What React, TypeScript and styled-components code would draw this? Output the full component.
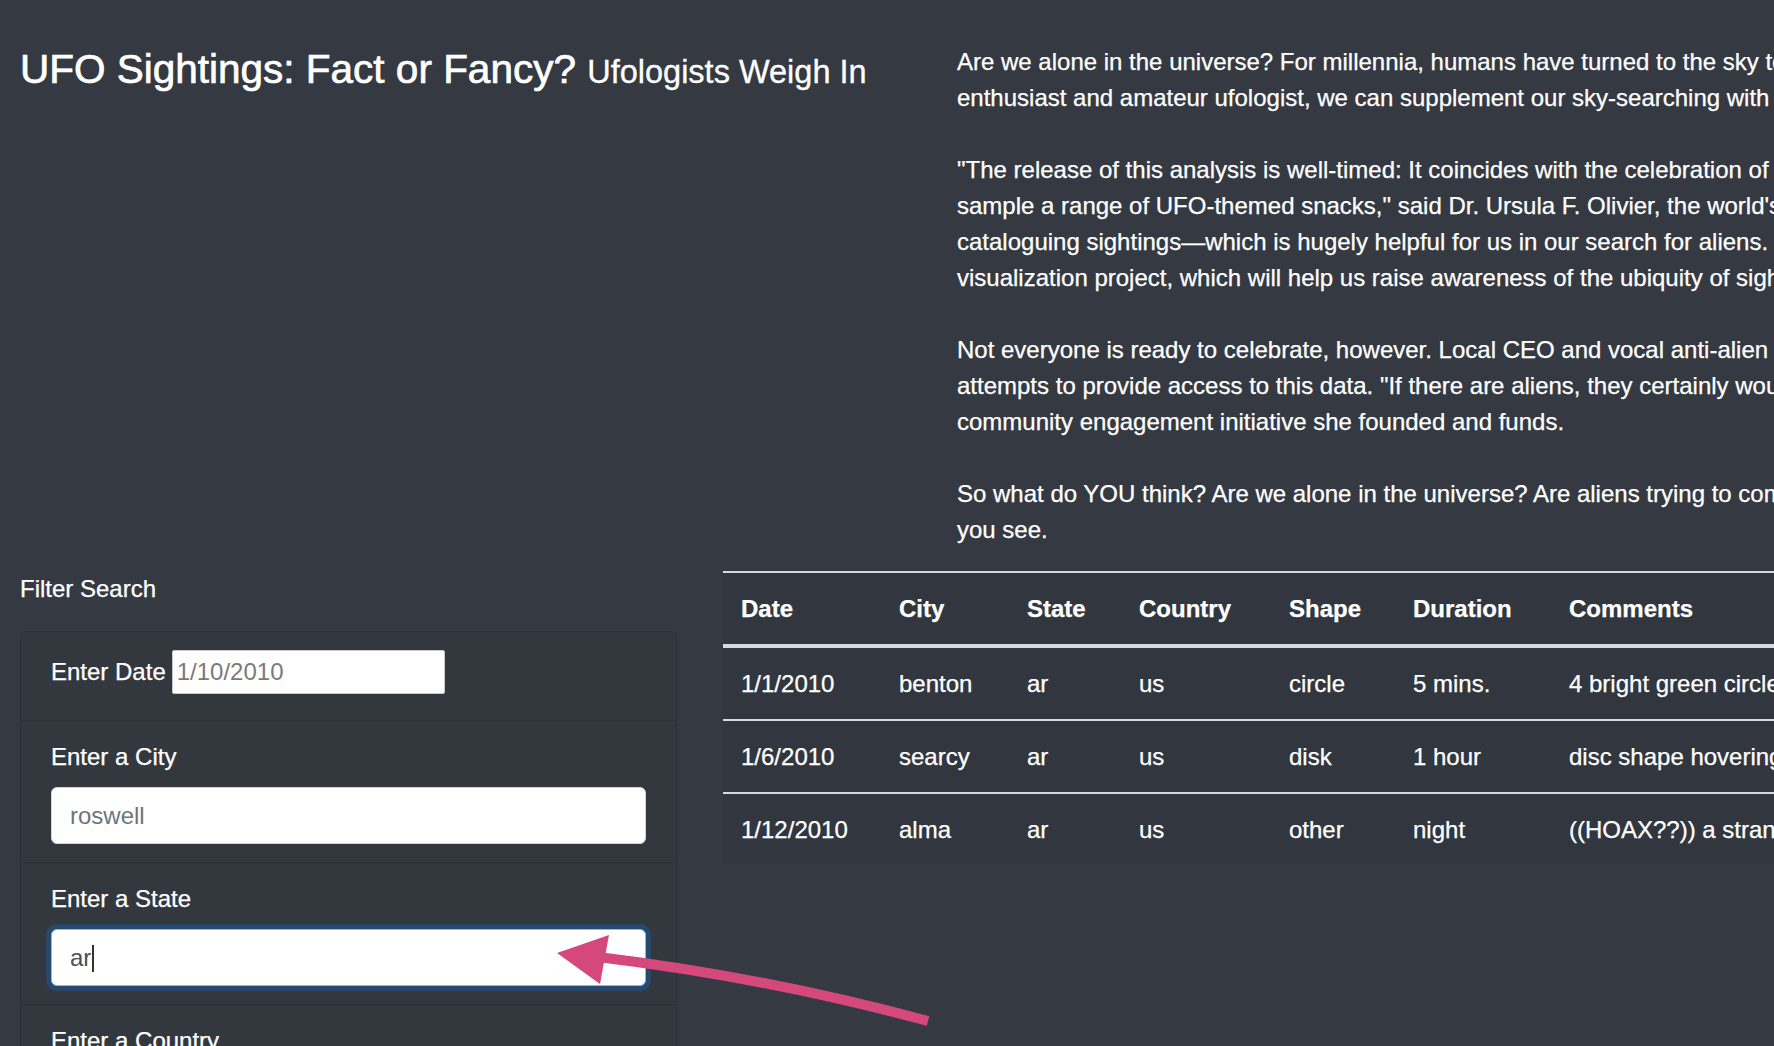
import React from 'react';
import styled, { createGlobalStyle } from 'styled-components';

const GlobalStyle = createGlobalStyle`
  html, body {
    margin: 0;
    padding: 0;
    overflow: hidden;
    background-color: #353a42;
  }
  body {
    font-family: "Liberation Sans", Arial, Helvetica, sans-serif;
    color: #ffffff;
  }
  * {
    box-sizing: border-box;
  }
`;

const Page = styled.div`
  position: relative;
  width: 100vw;
  height: 100vh;
  overflow: hidden;
  padding: 44px 0 0 20px;
`;

const IntroRow = styled.div`
  display: grid;
  grid-template-columns: 937px 1fr;
  margin-bottom: 23px;
`;

const Title = styled.h1`
  margin: 0;
  padding-top: 1px;
  font-size: 40.5px;
  font-weight: 400;
  line-height: 1.2;
  white-space: nowrap;
  -webkit-text-stroke: 0.7px #ffffff;
`;

const SubTitle = styled.small`
  font-size: 32.5px;
  font-weight: 400;
  -webkit-text-stroke: 0.3px #ffffff;
`;

const Story = styled.div`
  min-width: 0;
`;

const Paragraph = styled.p`
  margin: 0 0 36px;
  font-size: 24px;
  line-height: 36px;
  -webkit-text-stroke: 0.25px #ffffff;

  &:last-child {
    margin-bottom: 0;
  }
`;

const Line = styled.span`
  display: block;
  white-space: nowrap;
`;

const MainRow = styled.div`
  display: grid;
  grid-template-columns: 657px 1fr;
  column-gap: 46px;
  align-items: start;
`;

const FilterTitle = styled.div`
  font-size: 24px;
  line-height: 36px;
  margin-bottom: 24px;
  -webkit-text-stroke: 0.25px #ffffff;
`;

const FilterList = styled.ul`
  list-style: none;
  margin: 0;
  padding: 0;
  width: 657px;
  border-radius: 6px 6px 0 0;
  border: 1px solid #2c3036;
  background-color: #33383f;
`;

const FilterItem = styled.li`
  padding: 18px 30px;
  border-top: 1px solid #2c3036;

  &:first-child {
    border-top: none;
  }
`;

const DateRow = styled.div`
  display: flex;
  align-items: flex-start;
  gap: 6px;
  height: 52px;
`;

const InlineLabel = styled.label`
  font-size: 24px;
  line-height: 44px;
  -webkit-text-stroke: 0.25px #ffffff;
`;

const DateInput = styled.input`
  width: 273px;
  height: 44px;
  padding: 0 4px;
  font-family: inherit;
  font-size: 24px;
  color: #333;
  background: #fff;
  border: 1px solid #c6c8cc;
  border-radius: 2px;
  outline: none;

  &::placeholder {
    color: #7a7a7a;
  }
`;

const FieldLabel = styled.label`
  display: block;
  font-size: 24px;
  line-height: 36px;
  margin-bottom: 12px;
  -webkit-text-stroke: 0.25px #ffffff;
`;

const FieldWrap = styled.div`
  position: relative;
`;

const Caret = styled.span`
  position: absolute;
  left: 41px;
  top: 16px;
  width: 1.5px;
  height: 27px;
  background-color: #333;
`;

const FieldInput = styled.input<{ $focused?: boolean }>`
  display: block;
  width: 100%;
  height: 57px;
  padding: 0 18px;
  font-family: inherit;
  font-size: 24px;
  color: #495057;
  background-color: #fff;
  border: 1.5px solid ${({ $focused }) => ($focused ? '#80bdff' : '#ced4da')};
  border-radius: 6px;
  outline: none;
  box-shadow: ${({ $focused }) =>
    $focused ? '0 0 0 4.8px rgba(0, 123, 255, 0.25)' : 'none'};

  &::placeholder {
    color: #6c757d;
  }
`;

const TableBox = styled.div`
  min-width: 0;
`;

const Table = styled.table`
  width: 1500px;
  table-layout: fixed;
  border-collapse: separate;
  border-spacing: 0;
  background-color: rgba(0, 0, 0, 0.045);
  font-size: 24px;
  line-height: 36px;
  -webkit-text-stroke: 0.25px #ffffff;
`;

const Col = styled.col<{ $w: number }>`
  width: ${({ $w }) => $w}px;
`;

const HeadCell = styled.th`
  padding: 18px 18px 17px;
  text-align: left;
  font-weight: 700;
  white-space: nowrap;
  border-top: 2px solid #d6dadf;
  border-bottom: 2px solid #d6dadf;
`;

const Cell = styled.td`
  padding: 18px 18px 17px;
  white-space: nowrap;
  overflow: hidden;
  border-top: 2px solid #d6dadf;
`;

const BodyRow = styled.tr`
  &:first-child td {
    border-top: 2px solid #d6dadf;
  }
`;

const Annotation = styled.svg`
  position: absolute;
  left: 0;
  top: 0;
  pointer-events: none;
`;

const story: string[][] = [
  [
    'Are we alone in the universe? For millennia, humans have turned to the sky to find answers to this question, and now, with the help of Dana, a data visualization',
    'enthusiast and amateur ufologist, we can supplement our sky-searching with data analysis.',
  ],
  [
    '"The release of this analysis is well-timed: It coincides with the celebration of World UFO Day, when people across the globe gather to scan the skies and',
    'sample a range of UFO-themed snacks," said Dr. Ursula F. Olivier, the world\'s foremost expert on UFOs. "Dana and her team have done an incredible job',
    'cataloguing sightings\u2014which is hugely helpful for us in our search for aliens. We are very excited to see the results of this data',
    'visualization project, which will help us raise awareness of the ubiquity of sightings."',
  ],
  [
    'Not everyone is ready to celebrate, however. Local CEO and vocal anti-alien activist Irving S. Kepler vehemently denounces these',
    'attempts to provide access to this data. "If there are aliens, they certainly would not want us to find them," said Kepler at a',
    'community engagement initiative she founded and funds.',
  ],
  [
    'So what do YOU think? Are we alone in the universe? Are aliens trying to communicate with us? Dig through the data yourself and decide what',
    'you see.',
  ],
];

const columns = [
  { name: 'Date', width: 158 },
  { name: 'City', width: 128 },
  { name: 'State', width: 112 },
  { name: 'Country', width: 150 },
  { name: 'Shape', width: 124 },
  { name: 'Duration', width: 156 },
  { name: 'Comments', width: 672 },
];

const sightings = [
  {
    datetime: '1/1/2010',
    city: 'benton',
    state: 'ar',
    country: 'us',
    shape: 'circle',
    duration: '5 mins.',
    comments: '4 bright green circles high in the sky going in circles then one bright green light at my front door.',
  },
  {
    datetime: '1/6/2010',
    city: 'searcy',
    state: 'ar',
    country: 'us',
    shape: 'disk',
    duration: '1 hour',
    comments: 'disc shape hovering, red, blue and white lights in the sky over the town',
  },
  {
    datetime: '1/12/2010',
    city: 'alma',
    state: 'ar',
    country: 'us',
    shape: 'other',
    duration: 'night',
    comments: '((HOAX??)) a strange light moving across the night sky',
  },
];

const App = () => {
  return (
    <Page>
      <GlobalStyle />

      <IntroRow>
        <Title>
          UFO Sightings: Fact or Fancy? <SubTitle>Ufologists Weigh In</SubTitle>
        </Title>

        <Story>
          {story.map((lines, index) => (
            <Paragraph key={index}>
              {lines.map((line, i) => (
                <Line key={i}>{line}</Line>
              ))}
            </Paragraph>
          ))}
        </Story>
      </IntroRow>

      <MainRow>
        <div>
          <FilterTitle>Filter Search</FilterTitle>
          <FilterList>
            <FilterItem>
              <DateRow>
                <InlineLabel htmlFor="datetime">Enter Date</InlineLabel>
                <DateInput id="datetime" type="text" placeholder="1/10/2010" />
              </DateRow>
            </FilterItem>

            <FilterItem>
              <FieldLabel htmlFor="city">Enter a City</FieldLabel>
              <FieldInput id="city" type="text" placeholder="roswell" />
            </FilterItem>

            <FilterItem>
              <FieldLabel htmlFor="state">Enter a State</FieldLabel>
              <FieldWrap>
                <FieldInput id="state" type="text" defaultValue="ar" $focused />
                <Caret />
              </FieldWrap>
            </FilterItem>

            <FilterItem>
              <FieldLabel htmlFor="country">Enter a Country</FieldLabel>
              <FieldInput id="country" type="text" placeholder="us" />
            </FilterItem>

            <FilterItem>
              <FieldLabel htmlFor="shape">Enter a Shape</FieldLabel>
              <FieldInput id="shape" type="text" placeholder="circle" />
            </FilterItem>
          </FilterList>
        </div>

        <TableBox>
          <Table>
            <colgroup>
              {columns.map((col) => (
                <Col key={col.name} $w={col.width} />
              ))}
            </colgroup>
            <thead>
              <tr>
                {columns.map((col) => (
                  <HeadCell key={col.name}>{col.name}</HeadCell>
                ))}
              </tr>
            </thead>
            <tbody>
              {sightings.map((s) => (
                <BodyRow key={s.datetime}>
                  <Cell>{s.datetime}</Cell>
                  <Cell>{s.city}</Cell>
                  <Cell>{s.state}</Cell>
                  <Cell>{s.country}</Cell>
                  <Cell>{s.shape}</Cell>
                  <Cell>{s.duration}</Cell>
                  <Cell>{s.comments}</Cell>
                </BodyRow>
              ))}
            </tbody>
          </Table>
        </TableBox>
      </MainRow>

      <Annotation width="1774" height="1046" viewBox="0 0 1774 1046">
        <path
          d="M928 1021 Q 764 977 598 957"
          fill="none"
          stroke="#d5487b"
          strokeWidth="10"
        />
        <polygon points="557,953 609,935 600,984" fill="#d5487b" />
      </Annotation>
    </Page>
  );
};

export default App;
